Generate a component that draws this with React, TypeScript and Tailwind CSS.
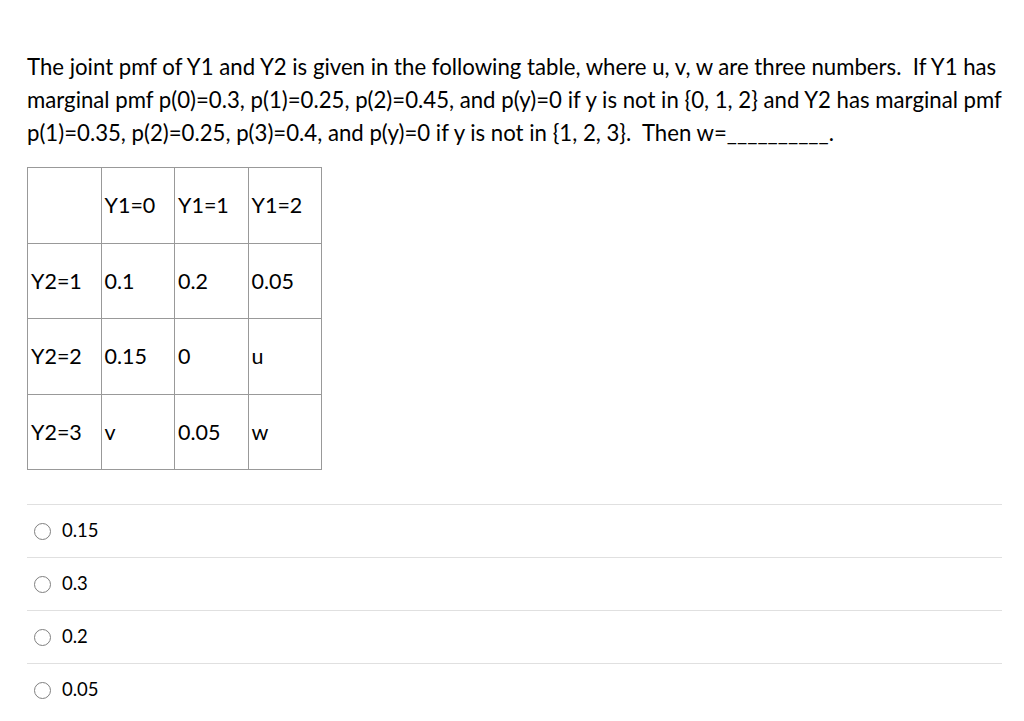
export default function App() {
  const rows = [
    ["Y2=1", "0.1", "0.2", "0.05"],
    ["Y2=2", "0.15", "0", "u"],
    ["Y2=3", "v", "0.05", "w"],
  ];
  const options = ["0.15", "0.3", "0.2", "0.05"];

  return (
    <div className="min-h-screen bg-white text-[#000] font-['Lato',sans-serif]">
      <div className="pl-[27px] pr-[20px] pt-[50px]">
        <p className="text-[22.2px] leading-[33px]">
          The joint pmf of Y1 and Y2 is given in the following table, where u, v, w are three numbers.&nbsp; If Y1 has
          <br />
          marginal pmf p(0)=0.3, p(1)=0.25, p(2)=0.45, and p(y)=0 if y is not in {"{0, 1, 2}"} and Y2 has marginal pmf
          <br />
          p(1)=0.35, p(2)=0.25, p(3)=0.4, and p(y)=0 if y is not in {"{1, 2, 3}"}.&nbsp; Then w=__________.
        </p>

        <table className="mt-[18px] border-collapse text-[21.5px]">
          <tbody>
            <tr className="h-[75.5px]">
              <td className="w-[73.5px] border border-[#999] px-[3px]"></td>
              <td className="w-[73.5px] border border-[#999] px-[3px]">Y1=0</td>
              <td className="w-[73.5px] border border-[#999] px-[3px]">Y1=1</td>
              <td className="w-[73.5px] border border-[#999] px-[3px]">Y1=2</td>
            </tr>
            {rows.map((r) => (
              <tr key={r[0]} className="h-[75.5px]">
                {r.map((c, i) => (
                  <td key={i} className="border border-[#999] px-[3px]">
                    {c}
                  </td>
                ))}
              </tr>
            ))}
          </tbody>
        </table>

        <div className="mt-[34px] w-[975px]">
          {options.map((o) => (
            <div key={o} className="flex h-[53px] items-center border-t border-[#e0e0e0] pl-[7px]">
              <span className="h-[17px] w-[17px] rounded-full border border-[#808080]"></span>
              <span className="ml-[11px] text-[18.5px]">{o}</span>
            </div>
          ))}
        </div>
      </div>
    </div>
  );
}
